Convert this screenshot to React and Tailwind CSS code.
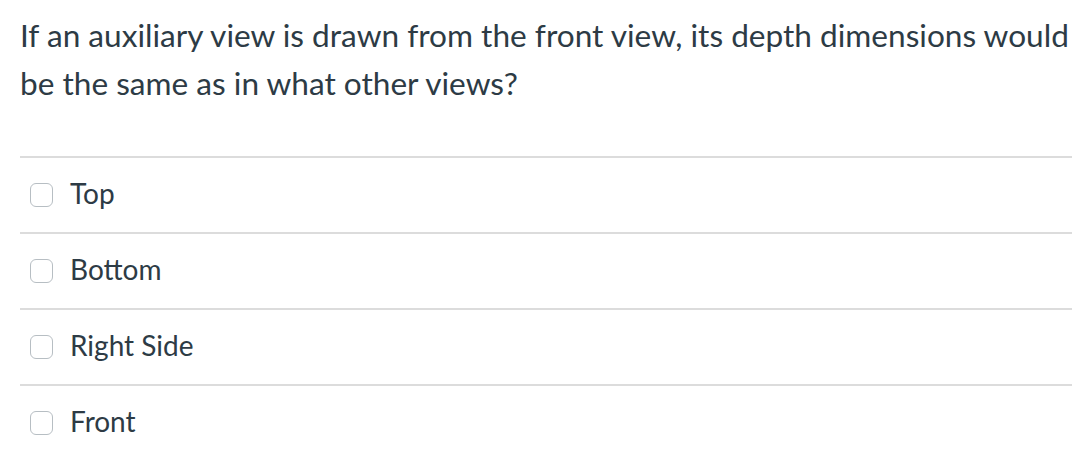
export default function App() {
  const answers = ['Top', 'Bottom', 'Right Side', 'Front'];

  return (
    <div className="w-[1078px] h-[450px] overflow-hidden bg-white font-['Lato','Liberation_Sans',sans-serif] text-[#2d3b45]">
      <div className="pl-[20px] pr-[6px]">
        <div className="pt-[11px] h-[156px] text-[31.6px] leading-[48px]">
          If an auxiliary view is drawn from the front view, its depth dimensions would be the same as in what other views?
        </div>
        {answers.map((a) => (
          <div key={a} className="border-t-2 border-[#dcdcdc] h-[76px] flex items-center">
            <span className="ml-[10px] w-[23px] h-[24px] rounded-[6px] border border-[#b7bec3] bg-white shrink-0" />
            <span className="ml-[17px] mb-[5px] text-[28px] leading-none">{a}</span>
          </div>
        ))}
      </div>
    </div>
  );
}
